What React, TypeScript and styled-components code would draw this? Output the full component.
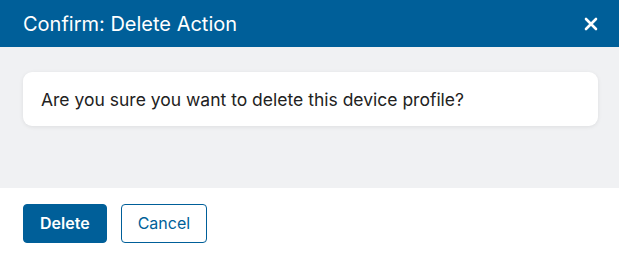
import { createGlobalStyle } from 'styled-components'
import styled from 'styled-components'

const GlobalStyle = createGlobalStyle`
  html, body {
    margin: 0;
    padding: 0;
    background: #ffffff;
    font-family: Inter, "Noto Sans", sans-serif;
  }
`

const Dialog = styled.div`
  width: 619px;
  height: 258px;
  display: flex;
  flex-direction: column;
  background: #ffffff;
`

const Header = styled.header`
  height: 47px;
  background-color: #005f99;
  display: flex;
  align-items: center;
  justify-content: space-between;
  padding: 0 21px 0 23px;
  box-sizing: border-box;
`

const Title = styled.h2`
  margin: 0;
  font-size: 20px;
  font-weight: 400;
  color: #ffffff;
`

const CloseButton = styled.button`
  border: 0;
  background: none;
  padding: 0;
  display: flex;
  color: #ffffff;
  cursor: pointer;
`

const Body = styled.div`
  flex: 1;
  background: #f0f1f3;
  padding: 25px 21px 0 23px;
`

const Card = styled.div`
  background: #ffffff;
  border-radius: 9px;
  height: 54px;
  display: flex;
  align-items: center;
  padding: 0 18px;
  box-shadow: 0 1px 4px rgba(0, 0, 0, 0.08);
  font-size: 17.5px;
  color: #222222;
`

const Footer = styled.footer`
  height: 70px;
  display: flex;
  align-items: center;
  gap: 14px;
  padding: 0 23px;
`

const Button = styled.button<{ $primary?: boolean }>`
  height: 39px;
  padding: 0 16px;
  border-radius: 4px;
  font-family: Inter, sans-serif;
  font-size: 16px;
  font-weight: ${p => (p.$primary ? 600 : 400)};
  border: 1px solid #005f99;
  background: ${p => (p.$primary ? '#005f99' : '#ffffff')};
  color: ${p => (p.$primary ? '#ffffff' : '#005f99')};
  cursor: pointer;
`

export default function App() {
  return (
    <>
      <GlobalStyle />
      <Dialog>
        <Header>
          <Title>Confirm: Delete Action</Title>
          <CloseButton aria-label="Close">
            <svg width="14" height="14" viewBox="0 0 14 14">
              <path d="M2 2L12 12M12 2L2 12" stroke="currentColor" strokeWidth="2.6" strokeLinecap="round" />
            </svg>
          </CloseButton>
        </Header>
        <Body>
          <Card>Are you sure you want to delete this device profile?</Card>
        </Body>
        <Footer>
          <Button $primary>Delete</Button>
          <Button>Cancel</Button>
        </Footer>
      </Dialog>
    </>
  )
}
